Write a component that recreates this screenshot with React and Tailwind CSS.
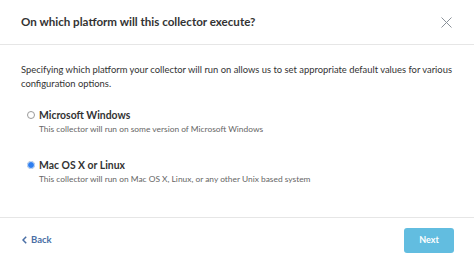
import React from 'react';

const options = [
    { id: 'win', label: 'Microsoft Windows', desc: 'This collector will run on some version of Microsoft Windows', checked: false },
    { id: 'unix', label: 'Mac OS X or Linux', desc: 'This collector will run on Mac OS X, Linux, or any other Unix based system', checked: true },
];

const App = () => {
    return (
        <div className="w-[474px] h-[262px] bg-white flex flex-col text-[#333]" style={{ fontFamily: 'Lato, "Open Sans", sans-serif' }}>
            {/* Header */}
            <div className="h-[45px] flex items-center justify-between pl-[21px] pr-[22px] border-b border-[#e6e6e6]">
                <h2 className="text-[11.6px] font-bold text-[#333] leading-none">On which platform will this collector execute?</h2>
                <svg width="11" height="11" viewBox="0 0 11 11" className="text-[#8a9199]">
                    <path d="M0.5 0.5 L10.5 10.5 M10.5 0.5 L0.5 10.5" stroke="currentColor" strokeWidth="1" fill="none" />
                </svg>
            </div>

            {/* Body */}
            <div className="flex-1 pl-[21px] pr-[10px] pt-[18px]">
                <p className="text-[9.4px] leading-[14px] text-[#333]">
                    Specifying which platform your collector will run on allows us to set appropriate default values for various configuration options.
                </p>
                <div className="flex flex-col gap-[23px] mt-[17px] pl-[6px]">
                    {options.map((opt) => (
                        <label key={opt.id} className="flex items-start gap-[4px]">
                            <span className="mt-[3px] w-[8px] h-[8px] rounded-full border flex items-center justify-center shrink-0 border-[#9a9a9a] bg-white">
                                {opt.checked && <span className="w-[8px] h-[8px] rounded-full bg-[#2f7ff0] border-[1.5px] border-[#cfe2fb] box-border shrink-0" />}
                            </span>
                            <span className="flex flex-col">
                                <span className="text-[10.4px] font-bold leading-[14px] text-[#333]">{opt.label}</span>
                                <span className="text-[8.4px] leading-[12px] mt-[1px] text-[#666]">{opt.desc}</span>
                            </span>
                        </label>
                    ))}
                </div>
            </div>

            {/* Footer */}
            <div className="h-[45px] border-t border-[#e6e6e6] flex items-center justify-between pl-[22px] pr-[20px]">
                <button className="flex items-center gap-[4px] text-[9.5px] font-bold text-[#4a6fa5]">
                    <svg width="5" height="8" viewBox="0 0 5 8">
                        <path d="M4.2 0.7 L1 4 L4.2 7.3" stroke="currentColor" strokeWidth="1.5" fill="none" />
                    </svg>
                    Back
                </button>
                <button className="w-[50px] h-[25px] rounded-[3px] bg-[#62bde0] text-white text-[9px] font-bold">Next</button>
            </div>
        </div>
    );
};

export default App;
